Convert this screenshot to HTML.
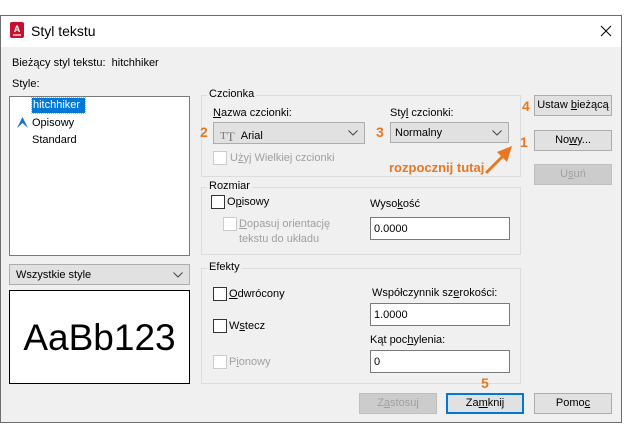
<!DOCTYPE html>
<html><head><meta charset="utf-8"><style>
*{box-sizing:border-box;margin:0;padding:0}
body{width:627px;height:436px;background:#fff;font-family:"Liberation Sans",Arial,sans-serif;font-size:11px;color:#000;position:relative;overflow:hidden}
.a{position:absolute;white-space:nowrap}
.win{position:absolute;left:0;top:15px;width:622px;height:408px;border:1px solid #6e6e6e;background:#f0f0f0}
.tb{position:absolute;left:0;top:0;width:620px;height:31px;background:#fff}
.box{position:absolute;background:#fff;border:1px solid #7a7a7a}
.grp{position:absolute;border:1px solid #dcdcdc}
.gt{position:absolute;background:#f0f0f0;padding:0 2px;top:-8px;left:5px}
.cb{position:absolute;width:14px;height:14px;background:#fff;border:1px solid #333}
.cb.d{border-color:#ccc}
.combo{position:absolute;background:#e1e1e1;border:1px solid #adadad;padding:4px 6px}
.btn{position:absolute;width:78px;height:21px;background:#e1e1e1;border:1px solid #adadad;text-align:center;line-height:19px;white-space:nowrap}
.dis{color:#a0a0a0}
.o{color:#e87722;font-weight:bold;font-size:14px}
.chev{position:absolute;right:6px;top:7px}
u{text-decoration:underline}
</style></head><body>
<div class="win">
 <div class="tb">
  <svg class="a" style="left:9px;top:6px" width="14" height="16"><rect x="0" y="0" width="14" height="16" rx="2" fill="#c8102e"/><text x="7" y="10" font-size="9" font-weight="bold" fill="#fff" text-anchor="middle" font-family="Liberation Sans">A</text><rect x="3" y="12" width="8" height="2" fill="#fff" opacity=".6"/></svg>
  <div class="a" style="left:30px;top:7px;font-size:14px">Styl tekstu</div>
  <svg class="a" style="left:599px;top:9px" width="12" height="12"><path d="M1 1L11 11M11 1L1 11" stroke="#000" stroke-width="1"/></svg>
 </div>
</div>
<div class="a" style="left:12px;top:57px">Bieżący styl tekstu:&nbsp; hitchhiker</div>
<div class="a" style="left:12px;top:78px">Style:</div>
<div class="box" style="left:9px;top:96px;width:181px;height:160px">
 <div class="a" style="left:22px;top:1px;width:53px;height:15px;background:#0078d7;color:#fff;padding:1px 0 0 1px;outline:1px dotted #f9a">hitchhiker</div>
 <svg class="a" style="left:7px;top:20px" width="11" height="11"><path d="M5.5 0L0 11L5.5 6L11 11Z" fill="#1e6fd0"/></svg>
 <div class="a" style="left:22px;top:20px">Opisowy</div>
 <div class="a" style="left:22px;top:37px">Standard</div>
</div>
<div class="combo" style="left:9px;top:264px;width:181px;height:21px;padding-top:4px">Wszystkie style<svg class="chev" width="10" height="6"><path d="M0.5 0.5L5 5L9.5 0.5" stroke="#444" fill="none"/></svg></div>
<div class="box" style="left:9px;top:290px;width:181px;height:94px;border-color:#000"><div class="a" style="left:0;width:179px;text-align:center;top:26px;font-size:37px">AaBb123</div></div>

<div class="grp" style="left:201px;top:95px;width:320px;height:82px"><div class="gt">Czcionka</div></div>
<div class="a" style="left:213px;top:107px"><u>N</u>azwa czcionki:</div>
<div class="a o" style="left:200px;top:124px">2</div>
<div class="combo" style="left:213px;top:122px;width:152px;height:22px"><span style="font-family:'Liberation Serif';color:#777;font-size:11px">T<span style="font-size:13px;position:relative;top:2px">T</span></span> &nbsp;Arial<svg class="chev" width="10" height="6"><path d="M0.5 0.5L5 5L9.5 0.5" stroke="#444" fill="none"/></svg></div>
<div class="a" style="left:390px;top:107px">Sty<u>l</u> czcionki:</div>
<div class="a o" style="left:376px;top:124px">3</div>
<div class="combo" style="left:390px;top:122px;width:119px;height:21px;padding-left:4px">Normalny<svg class="chev" width="10" height="6"><path d="M0.5 0.5L5 5L9.5 0.5" stroke="#444" fill="none"/></svg></div>
<div class="cb d" style="left:213px;top:151px"></div>
<div class="a dis" style="left:230px;top:152px">U<u>ż</u>yj Wielkiej czcionki</div>
<div class="a o" style="left:389px;top:160px;font-size:13px">rozpocznij tutaj</div>
<svg class="a" style="left:483px;top:144px" width="32" height="32"><path d="M3 29L22 10" stroke="#e87722" stroke-width="3"/><path d="M29 2L14 8L24 18Z" fill="#e87722"/></svg>
<div class="a o" style="left:520px;top:134px">1</div>
<div class="a o" style="left:522px;top:98px">4</div>
<div class="btn" style="left:534px;top:95px">Ustaw <u>b</u>ieżącą</div>
<div class="btn" style="left:534px;top:130px">No<u>w</u>y...</div>
<div class="btn dis" style="left:534px;top:164px;border-color:#bfbfbf;background:#ccc">U<u>s</u>uń</div>

<div class="grp" style="left:201px;top:187px;width:320px;height:68px"><div class="gt">Rozmiar</div></div>
<div class="cb" style="left:211px;top:195px"></div>
<div class="a" style="left:227px;top:196px">O<u>p</u>isowy</div>
<div class="cb d" style="left:223px;top:217px"></div>
<div class="a dis" style="left:239px;top:217px;line-height:15px"><u>D</u>opasuj orientację<br>tekstu do układu</div>
<div class="a" style="left:370px;top:198px">Wyso<u>k</u>ość</div>
<div class="box" style="left:370px;top:217px;width:140px;height:23px;padding:5px 3px">0.0000</div>

<div class="grp" style="left:201px;top:268px;width:320px;height:116px"><div class="gt">Efekty</div></div>
<div class="cb" style="left:213px;top:287px"></div><div class="a" style="left:229px;top:288px"><u>O</u>dwrócony</div>
<div class="cb" style="left:213px;top:319px"></div><div class="a" style="left:229px;top:320px">W<u>s</u>tecz</div>
<div class="cb d" style="left:213px;top:355px"></div><div class="a dis" style="left:229px;top:356px">P<u>i</u>onowy</div>
<div class="a" style="left:372px;top:287px">Współczynnik sz<u>e</u>rokości:</div>
<div class="box" style="left:370px;top:303px;width:140px;height:23px;padding:5px 3px">1.0000</div>
<div class="a" style="left:370px;top:334px">Kąt poc<u>h</u>ylenia:</div>
<div class="box" style="left:370px;top:350px;width:140px;height:23px;padding:5px 3px">0</div>

<div class="a o" style="left:481px;top:375px">5</div>
<div class="btn dis" style="left:359px;top:393px;border-color:#bfbfbf;background:#ccc">Z<u>a</u>stosuj</div>
<div class="btn" style="left:446px;top:393px;border:2px solid #0078d7;line-height:17px">Za<u>m</u>knij</div>
<div class="btn" style="left:534px;top:393px">Pomo<u>c</u></div>
</body></html>
